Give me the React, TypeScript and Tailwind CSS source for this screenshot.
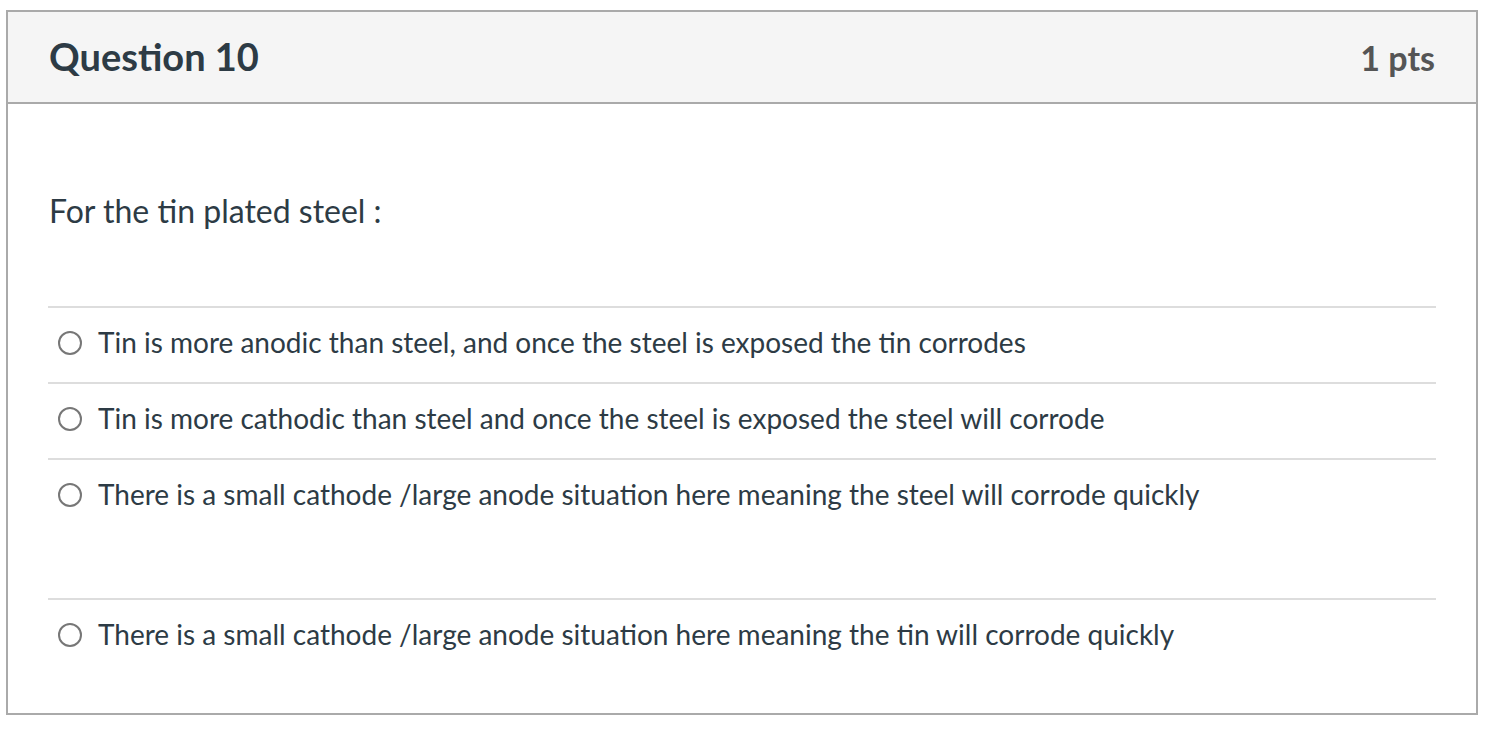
const OPTIONS = [
  { id: "a", label: "Tin is more anodic than steel, and once the steel is exposed the tin corrodes", extra: false },
  { id: "b", label: "Tin is more cathodic than steel and once the steel is exposed the steel will corrode", extra: false },
  { id: "c", label: "There is a small cathode /large anode situation here meaning the steel will corrode quickly", extra: true },
  { id: "d", label: "There is a small cathode /large anode situation here meaning the tin will corrode quickly", extra: false },
];

export default function App() {
  return (
    <div className="min-h-screen bg-white pl-[6px] pt-[10px] font-['Lato','Liberation_Sans',sans-serif] text-[#2d3b45]">
      <div className="w-[1472px] border-2 border-[#aaaaaa]">
        <div className="flex h-[92px] items-center justify-between border-b-2 border-[#aaaaaa] bg-[#f5f5f5] px-[41px]">
          <h2 className="text-[38px] font-bold leading-[40px] -mt-[2px]">Question 10</h2>
          <span className="text-[34px] font-bold text-[#555]">1 pts</span>
        </div>
        <div className="px-[40px] pb-[39px]">
          <p className="pl-px pt-[87px] pb-[75px] text-[32px] leading-[40px]">For the tin plated steel :</p>
          <ul>
            {OPTIONS.map((o) => (
              <li key={o.id} className={`border-t-2 border-[#dddddd] ${o.extra ? "h-[140px]" : "h-[76px]"}`}>
                <label className="flex h-[68px] items-center gap-[16px] pl-[10px]">
                  <span className="mt-[2px] h-[24px] w-[24px] shrink-0 rounded-full border-2 border-[#777777] bg-white" />
                  <span className="text-[28px]">{o.label}</span>
                </label>
              </li>
            ))}
          </ul>
        </div>
      </div>
    </div>
  );
}
